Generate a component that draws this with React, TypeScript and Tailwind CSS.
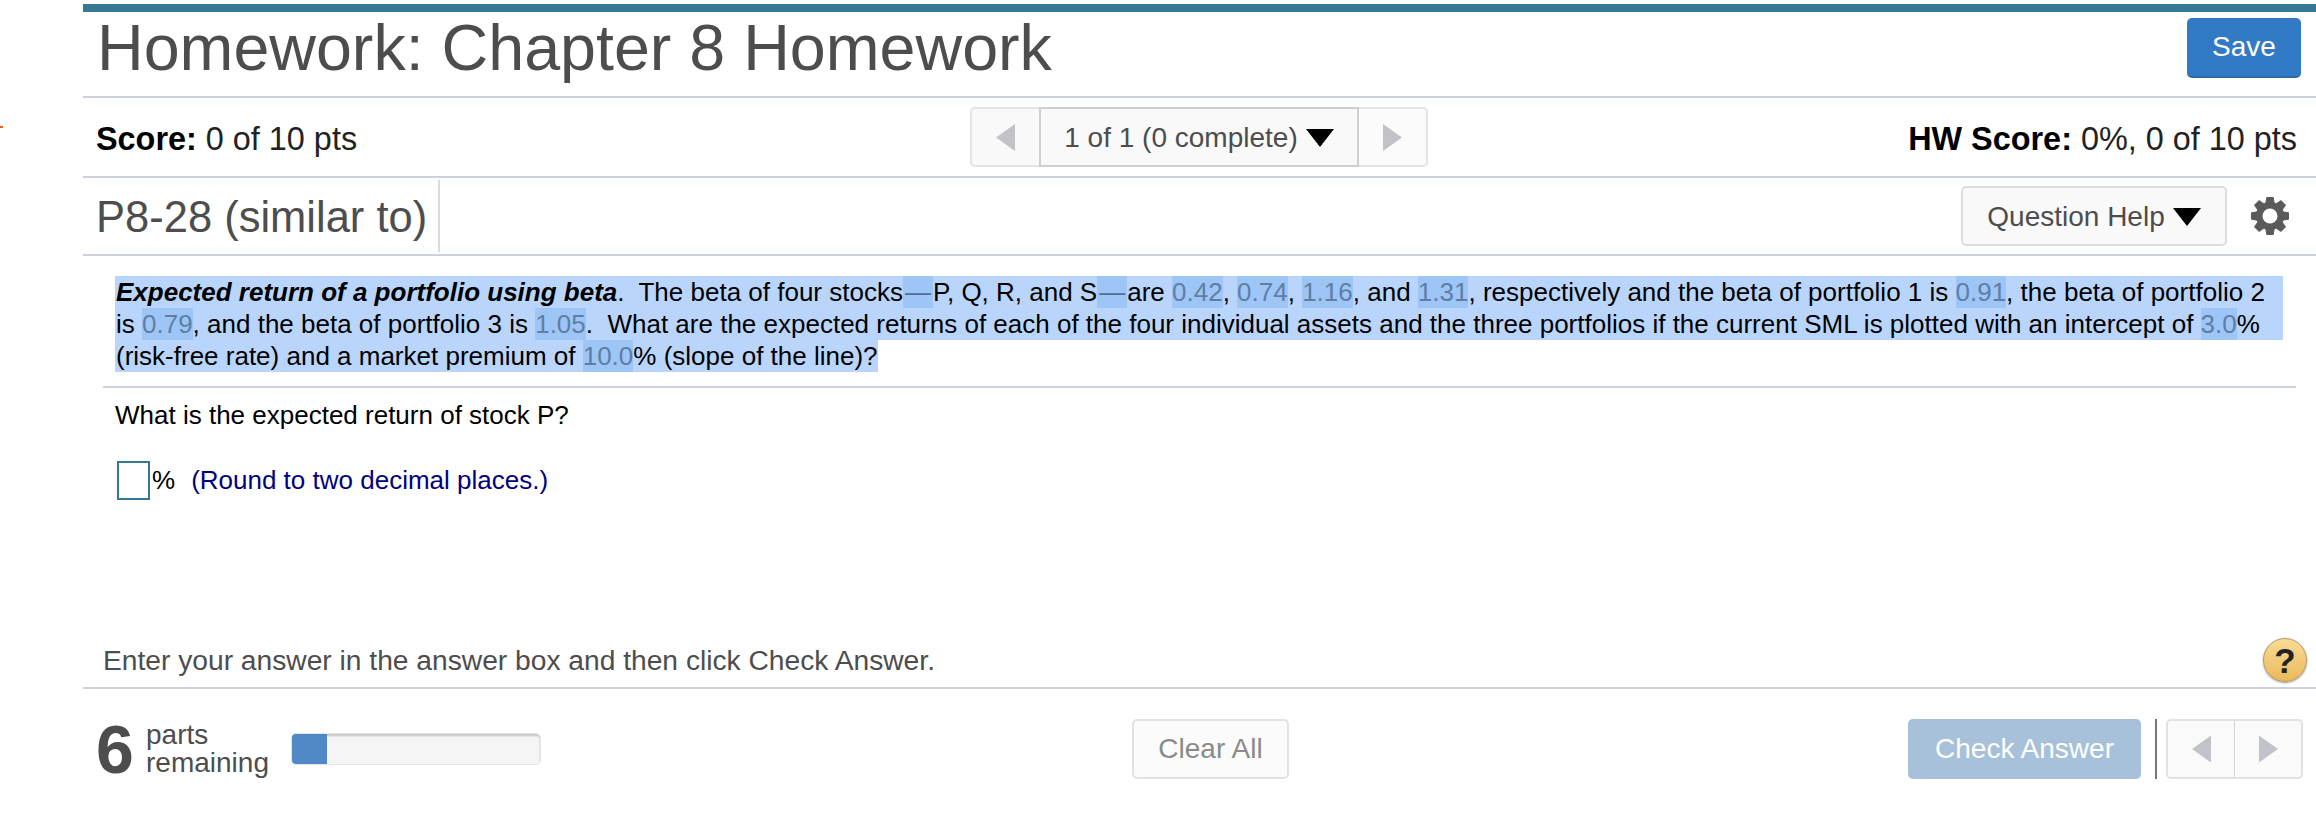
function TriLeft({ className }: { className: string }) {
  return (
    <svg className={className} viewBox="0 0 19 27" aria-hidden="true">
      <polygon points="19,0 19,27 0,13.5" fill="#c1c3c8" />
    </svg>
  )
}

function TriRight({ className }: { className: string }) {
  return (
    <svg className={className} viewBox="0 0 19 27" aria-hidden="true">
      <polygon points="0,0 0,27 19,13.5" fill="#c1c3c8" />
    </svg>
  )
}

function TriDown({ className }: { className: string }) {
  return (
    <svg className={className} viewBox="0 0 28 18" aria-hidden="true">
      <polygon points="0,0 28,0 14,18" fill="#000" />
    </svg>
  )
}

function Gear() {
  const angles = [0, 45, 90, 135, 180, 225, 270, 315]
  return (
    <svg className="w-[40px] h-[40px]" viewBox="0 0 40 40" aria-hidden="true">
      {angles.map(a => (
        <polygon
          key={a}
          points="15.5,9 16.8,1.5 23.2,1.5 24.5,9"
          fill="#5a5a5a"
          stroke="#5a5a5a"
          strokeWidth="1"
          strokeLinejoin="round"
          transform={`rotate(${a} 20 20)`}
        />
      ))}
      <circle cx="20" cy="20" r="14" fill="#5a5a5a" />
      <circle cx="20" cy="20" r="7.5" fill="#fff" />
    </svg>
  )
}

function Num({ children }: { children: string }) {
  return <span className="inline-block h-[32px] bg-[#9dc6f6] text-[#5f7ea6]">{children}</span>
}

function Dash() {
  return <span className="inline-block w-[30px] h-[32px] text-center bg-[#9dc6f6] text-[#4f6f96]">—</span>
}

export default function App() {
  return (
    <div className="relative w-[2316px] h-[834px] bg-white overflow-hidden font-['Liberation_Sans',Arial,sans-serif]">
      {/* stray mark at the left edge */}
      <div className="absolute left-0 top-[126px] w-[3px] h-[2px] bg-[#e8621a]" />

      <div className="ml-[83px] pt-[4px]">
        <div className="h-[8px] bg-[#337895]" />

        {/* Title */}
        <div className="h-[86px] flex items-center justify-between pl-[14px] pr-[15px] border-b-2 border-[#cdd1dc]">
          <h1 className="text-[64.6px] leading-none text-[#4d4d4d] -mt-[12px]">Homework: Chapter 8 Homework</h1>
          <button className="w-[114px] h-[60px] -mt-[12px] rounded-[5px] bg-[#337ac6] border-b-2 border-[#2e6da4] text-white text-[28px]">
            Save
          </button>
        </div>

        {/* Score row */}
        <div className="h-[80px] grid grid-cols-[874px_458px_1fr] items-center pt-[3px] pl-[13px] pr-[19px] border-b-2 border-[#cdd1dc]">
          <div className="text-[32.4px] text-black mt-[2px]">
            <b>Score:</b> <span className="text-[#222]">0 of 10 pts</span>
          </div>
          <div className="flex h-[60px] -mt-[3px]">
            <div className="w-[69px] flex items-center justify-center bg-[#f9f9f9] border-2 border-r-0 border-[#e4e4e4] rounded-l-[5px]">
              <TriLeft className="w-[19px] h-[27px]" />
            </div>
            <div className="w-[320px] pt-[2px] flex items-center justify-center gap-[8px] bg-[#f9f9f9] border-2 border-[#cfcfcf] text-[28px] text-[#4d4d4d]">
              1 of 1 (0 complete)
              <TriDown className="w-[28px] h-[18px]" />
            </div>
            <div className="w-[69px] flex items-center justify-center bg-[#fbfbfb] border-2 border-l-0 border-[#e4e4e4] rounded-r-[5px]">
              <TriRight className="w-[19px] h-[27px]" />
            </div>
          </div>
          <div className="text-[32.4px] text-right text-black mt-[2px]">
            <b>HW Score:</b> <span className="text-[#222]">0%, 0 of 10 pts</span>
          </div>
        </div>

        {/* Question title row */}
        <div className="h-[78px] flex items-center justify-between pl-[13px] pr-[26px] border-b-2 border-[#cdd1dc]">
          <div className="h-[72px] flex items-center border-r-2 border-[#d8dbe3] pr-[11px]">
            <span className="text-[43.5px] text-[#4d4d4d] leading-none mt-[3px]">P8-28 (similar to)</span>
          </div>
          <div className="flex items-center gap-[23px]">
            <button className="w-[266px] h-[60px] pt-[2px] flex items-center justify-center gap-[8px] rounded-[5px] bg-[#f9f9f9] border-2 border-[#dddddd] text-[28px] text-[#4d4d4d]">
              Question Help
              <TriDown className="w-[28px] h-[18px]" />
            </button>
            <Gear />
          </div>
        </div>

        {/* Selected question text */}
        <div className="ml-[32px] mt-[20px] text-[26px] leading-[32px] text-black whitespace-pre">
          <div className="w-[2168px] h-[32px] bg-[#b9d5fb] pl-[1px]">
            <b><i>Expected return of a portfolio using beta</i></b>{'.  The beta of four stocks'}<Dash />{'P, Q, R, and S'}<Dash />{'are '}<Num>0.42</Num>{', '}<Num>0.74</Num>{', '}<Num>1.16</Num>{', and '}<Num>1.31</Num>{', respectively and the beta of portfolio 1 is '}<Num>0.91</Num>{', the beta of portfolio 2'}
          </div>
          <div className="w-[2168px] h-[32px] bg-[#b9d5fb] pl-[1px]">
            {'is '}<Num>0.79</Num>{', and the beta of portfolio 3 is '}<Num>1.05</Num>{'.  What are the expected returns of each of the four individual assets and the three portfolios if the current SML is plotted with an intercept of '}<Num>3.0</Num>{'%'}
          </div>
          <div className="w-fit h-[32px] bg-[#b9d5fb] pl-[1px]">
            {'(risk-free rate) and a market premium of '}<Num>10.0</Num>{'% (slope of the line)?'}
          </div>
        </div>

        <div className="ml-[20px] mr-[20px] mt-[14px] h-[2px] bg-[#cdd1dc]" />

        <div className="ml-[32px] mt-[11px] text-[26px] leading-[32px] text-black">What is the expected return of stock P?</div>

        <div className="ml-[34px] mt-[30px] flex items-center h-[39px] text-[26px]">
          <div className="w-[33px] h-[39px] border-2 border-[#337895]" />
          <span className="ml-[2px] text-black">%</span>
          <span className="ml-[16px] text-[#000080]">(Round to two decimal places.)</span>
        </div>

        {/* Instruction row */}
        <div className="mt-[117px] h-[72px] flex items-center justify-between pt-[16px] pl-[20px] pr-[9px] border-b-2 border-[#cdd1dc]">
          <span className="text-[28.2px] text-[#4d4d4d]">Enter your answer in the answer box and then click Check Answer.</span>
          <div className="w-[44px] h-[44px] rounded-full flex items-center justify-center border border-[#b8995c] bg-gradient-to-b from-[#f8dc95] to-[#eab95a] shadow-[0_1px_2px_rgba(0,0,0,0.4)] text-[35px] leading-none font-bold text-[#222]">
            ?
          </div>
        </div>

        {/* Footer */}
        <div className="h-[120px] grid grid-cols-[1036px_157px_1fr] items-center pl-[13px] pr-[13px]">
          <div className="flex items-center">
            <span className="text-[68px] font-bold leading-none text-[#4d4d4d] w-[50px]">6</span>
            <div className="text-[28px] leading-[28px] text-[#4d4d4d] w-[145px]">
              parts
              <br />
              remaining
            </div>
            <div className="w-[250px] h-[32px] rounded-[5px] bg-[#f5f5f5] border border-[#e4e4e4] shadow-[inset_0_2px_2px_rgba(0,0,0,0.2)] overflow-hidden">
              <div className="w-[35px] h-full bg-[#5089c6]" />
            </div>
          </div>
          <button className="w-[157px] h-[60px] rounded-[5px] bg-[#fbfbfb] border-2 border-[#e2e2e2] text-[28px] text-[#8a8a8a]">
            Clear All
          </button>
          <div className="flex items-center justify-end">
            <button className="w-[233px] h-[60px] rounded-[5px] bg-[#a6c1d9] text-white text-[28px]">Check Answer</button>
            <div className="w-[2px] h-[60px] bg-[#777] ml-[14px] mr-[9px]" />
            <div className="w-[137px] h-[60px] flex bg-[#fafafa] border-2 border-[#e2e2e2] rounded-[5px]">
              <div className="w-[67px] flex items-center justify-center border-r border-[#d4d4d4]">
                <TriLeft className="w-[19px] h-[28px]" />
              </div>
              <div className="flex-1 flex items-center justify-center">
                <TriRight className="w-[19px] h-[28px]" />
              </div>
            </div>
          </div>
        </div>
      </div>
    </div>
  )
}
